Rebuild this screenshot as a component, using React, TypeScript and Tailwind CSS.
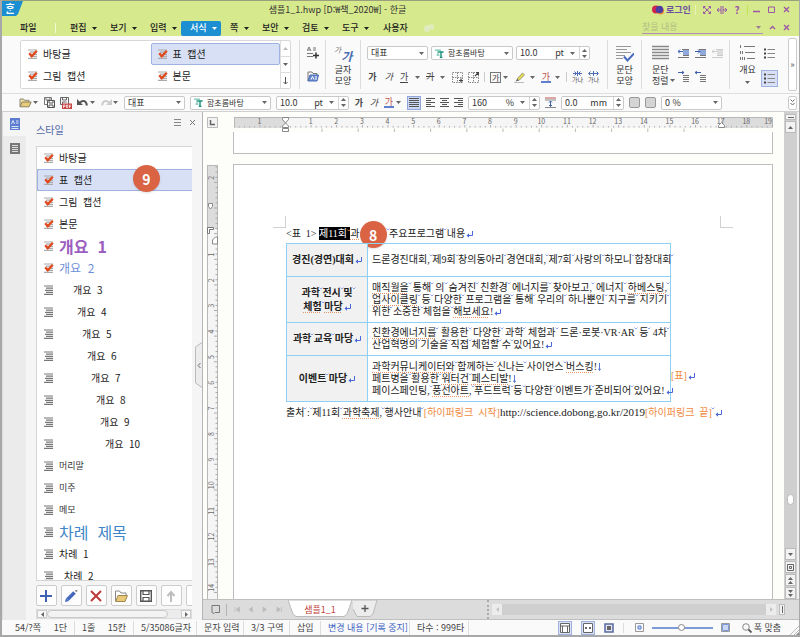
import React from "react";
import clsx from "clsx";

const UI_FONT = "font-['Noto_Sans_CJK_KR','Noto_Sans',sans-serif]";
const DOC_FONT = "font-['Liberation_Serif','Noto_Sans_CJK_KR',serif]";

const menus = ["편집", "보기", "입력", "서식", "쪽", "보안", "검토", "도구"];

const gallery = ["바탕글", "표  캡션", "그림  캡션", "본문"];

type StyleRow = { name: string; checked?: boolean; indent?: number; look?: string };

const styleRows: StyleRow[] = [
  { name: "바탕글", checked: true },
  { name: "표  캡션", checked: true },
  { name: "그림  캡션", checked: true },
  { name: "본문", checked: true },
  { name: "개요  1", checked: true, look: "text-[16px] font-bold text-[#9b5fc0]" },
  { name: "개요  2", checked: true, look: "text-[12px] text-[#6f8fd8]" },
  { name: "개요  3", indent: 14 },
  { name: "개요  4", indent: 18 },
  { name: "개요  5", indent: 23 },
  { name: "개요  6", indent: 28 },
  { name: "개요  7", indent: 32 },
  { name: "개요  8", indent: 37 },
  { name: "개요  9", indent: 41 },
  { name: "개요  10", indent: 46 },
  { name: "머리말", look: "text-[9px] text-[#333]" },
  { name: "미주", look: "text-[9px] text-[#333]" },
  { name: "메모", look: "text-[9px] text-[#333]" },
  { name: "차례  제목", look: "text-[16px] text-[#3f86c8]" },
  { name: "차례  1" },
  { name: "차례  2", indent: 5 },
];

// ˇ = visible space, {..} = spelling mark, [..] = field code, ↵ / ↓ = paragraph and line break
const tableRows = [
  {
    height: "h-[33px]",
    head: ["경진(경연)대회↵"],
    body: ["드론경진대회,ˇ제9회ˇ창의동아리ˇ경연대회,ˇ제7회ˇ사랑의ˇ하모니ˇ합창대회ˇ"],
  },
  {
    height: "h-[46px]",
    head: ["과학ˇ전시ˇ및ˇ", "{체험}ˇ{마당}↵"],
    body: [
      "{매직월을}ˇ통해ˇ의ˇ숨겨진ˇ친환경ˇ에너지를ˇ찾아보고,ˇ에너지ˇ{하베스팅},ˇ",
      "{업사이클링}ˇ등ˇ다양한ˇ프로그램을ˇ통해ˇ우리의ˇ하나뿐인ˇ지구를ˇ지키기ˇ",
      "위한ˇ소중한ˇ체험을ˇ{해보세요}!↵",
    ],
  },
  {
    height: "h-[33px]",
    head: ["과학ˇ교육ˇ마당↵"],
    body: [
      "{친환경에너지를}ˇ활용한ˇ다양한ˇ과학ˇ체험과ˇ드론·로봇·VR·ARˇ등ˇ4차ˇ",
      "산업혁명의ˇ기술을ˇ직접ˇ체험할ˇ수ˇ있어요!↵",
    ],
  },
  {
    height: "h-[46px]",
    head: ["이벤트ˇ마당↵"],
    body: [
      "{과학커뮤니케이터와}ˇ함께하는ˇ신나는ˇ사이언스ˇ{버스킹}!↓",
      "페트병을ˇ활용한ˇ{워터건}ˇ{페스티발}!↓",
      "페이스페인팅,ˇ{풍선아트},ˇ푸드트럭ˇ등ˇ다양한ˇ이벤트가ˇ준비되어ˇ있어요!↵",
    ],
  },
];

/* ---------- small drawings ---------- */

type SvgProps = { w: number; h: number; children: React.ReactNode; className?: string };

const Svg = ({ w, h, children, className }: SvgProps) => (
  <svg
    width={w}
    height={h}
    viewBox={`0 0 ${w} ${h}`}
    fill="none"
    stroke="#666"
    className={clsx("shrink-0", className)}
    aria-hidden="true"
  >
    {children}
  </svg>
);

const Down = ({ color = "#666" }: { color?: string }) => (
  <Svg w={5} h={3}>
    <path d="M0 0h5L2.5 3z" fill={color} stroke="none" />
  </Svg>
);

const Up = ({ color = "#666" }: { color?: string }) => (
  <Svg w={5} h={3}>
    <path d="M0 3h5L2.5 0z" fill={color} stroke="none" />
  </Svg>
);

const StyleIcon = ({ checked }: { checked?: boolean }) => (
  <Svg w={10} h={10}>
    <path d="M0 1h9M2 3.2h7M1 5.4h8M2 7.4h7M0 9.4h9" stroke={checked ? "#aaa" : "#777"} strokeWidth="1.2" />
    {checked && <path d="M1.2 4.2 3.8 7.2 8.8 1.8" stroke="#e2491d" strokeWidth="2.3" />}
  </Svg>
);

const FontMark = () => (
  <Svg w={9} h={9}>
    <path d="M0 1.2h6M3 1v5M1.5 6.2h3" stroke="#7cc5b4" strokeWidth="1.3" />
    <path d="M3.4 3h5.2M6 3v5.5M4.8 8.4h2.6" stroke="#189078" strokeWidth="1.4" />
  </Svg>
);

const FolderIcon = () => (
  <Svg w={13} h={11}>
    <path d="M1 9.5V2h3.5l1 1.3H10V5" fill="#f3dfa0" stroke="#8a8a7a" />
    <path d="M1 9.8 3.2 5h9L10 9.8z" fill="#e8cc7c" stroke="#8a8060" />
  </Svg>
);

const SaveAllIcon = () => (
  <Svg w={11} h={11}>
    <path d="M.5.5h7v7h-7zM2 .5v2.5h4V.5" stroke="#777" />
    <path d="M3.5 3.5h7v7h-7z" fill="#fff" stroke="#555" />
    <path d="M5 3.5V6h4V3.5M5 10.5V8h4v2.5" stroke="#555" />
  </Svg>
);

const PdfIcon = () => (
  <Svg w={12} h={12}>
    <path d="M.5.5h8v7h-8zM2.5.5V3h4V.5M2.5 7.5V5h4" stroke="#666" />
    <path d="M2 6.5h10V12H2z" fill="#c8413f" stroke="none" />
    <path d="M3.5 11V8h1.5v1.5H3.5M6.5 8v2.7h1.3V8zM9.5 11V8h1.5M9.5 9.5h1.3" stroke="#fff" strokeWidth=".7" />
  </Svg>
);

const UndoIcon = ({ flip, color }: { flip?: boolean; color: string }) => (
  <Svg w={11} h={9} className={flip ? "-scale-x-100" : undefined}>
    <path d="M0 1v6h6z" fill={color} stroke="none" />
    <path d="M3 4.5C6 1.5 9.5 3 9.8 7.5" stroke={color} strokeWidth="2" />
  </Svg>
);

const alignPaths = {
  justify: "M0 .5h10M0 2.5h10M0 4.5h10M0 6.5h10M0 8.5h10",
  left: "M0 .5h9M0 2.5h5M0 4.5h9M0 6.5h5M0 8.5h9",
  center: "M0 .5h9M2 2.5h5M0 4.5h9M2 6.5h5M0 8.5h9",
  right: "M0 .5h9M4 2.5h5M0 4.5h9M4 6.5h5M0 8.5h9",
};

const AlignIcon = ({ kind }: { kind: keyof typeof alignPaths }) => (
  <Svg w={kind === "justify" ? 10 : 9} h={9}>
    <path d={alignPaths[kind]} stroke="#555" />
  </Svg>
);

const LineSpaceIcon = () => (
  <Svg w={11} h={11}>
    <path d="M0 1h11" stroke="#c0504d" />
    <path d="M0 3h11M0 10.5h11" stroke="#888" />
    <path d="M5.5 4v5M4 5.5l1.5-1.5L7 5.5M4 8l1.5 1.5L7 8" stroke="#3c5fae" />
  </Svg>
);

const IndentIcon = ({ out, hang, dim }: { out?: boolean; hang?: boolean; dim?: boolean }) => (
  <Svg w={11} h={11}>
    {hang ? (
      <>
        <path d="M0 1.5h6" stroke="#3c5fae" />
        <path d={out ? "M2 0 0 1.5 2 3" : "M4 0l2 1.5L4 3"} stroke="#3c5fae" />
        <path d="M5 4.5h6M5 6.5h6M5 8.5h6M5 10.5h6" stroke="#777" />
      </>
    ) : (
      <>
        <path d="M4 1.5h7M5 3.5h6M5 5.5h6M5 7.5h6M0 9.5h11" stroke={dim ? "#ccc" : "#777"} />
        <path d="M5 2h6v5H5z" fill={dim ? "#ddd" : "#8fa9dd"} stroke="none" />
        <path d={out ? "M0 3.5h5M3 1.5l2 2-2 2" : "M0 3.5h5M2 1.5l-2 2 2 2"} stroke={dim ? "#ccc" : "#3c5fae"} />
      </>
    )}
  </Svg>
);

const BulletIcon = () => (
  <Svg w={11} h={11}>
    <path d="M3.5 1.5H11M3.5 5.5H11M3.5 9.5H11" stroke="#888" />
    <path d="M0 1.5h2M0 5.5h2M0 9.5h2" stroke="#444" strokeWidth="2" />
  </Svg>
);

const GridIcon = ({ mark }: { mark: string }) => (
  <Svg w={11} h={11}>
    <path d="M.5.5h10v10H.5zM5.5.5v10M.5 5.5h10" stroke="#888" strokeDasharray="1.5 1" />
    <path d={mark} stroke="#444" strokeWidth="1.2" />
  </Svg>
);

const SpacingIcon = ({ wide }: { wide?: boolean }) => (
  <Svg w={11} h={5}>
    <path d="M1 2.5h9" stroke="#4a6cb5" />
    <path
      d={wide ? "M2.5.5l-2 2 2 2M8.5.5l2 2-2 2M5.5 0v5" : "M2.5.5l2 2-2 2M8.5.5l-2 2 2 2M5.5 0v5"}
      stroke="#4a6cb5"
    />
  </Svg>
);

const ReturnMark = ({ line }: { line?: boolean }) =>
  line ? (
    <svg width="3" height="8" viewBox="0 0 3 8" fill="none" stroke="#5b78d6" className="ml-px inline-block align-middle" aria-hidden="true">
      <path d="M1.5 0v7M0 5.5l1.5 2 1.5-2" />
    </svg>
  ) : (
    <svg width="7" height="7" viewBox="0 0 7 7" fill="none" stroke="#4a68d8" className="ml-px inline-block align-middle" aria-hidden="true">
      <path d="M6.5 0v4.5H2" />
      <path d="M3 2.2.5 4.5 3 6.8z" fill="#4a68d8" stroke="none" />
    </svg>
  );

/* ---------- controls ---------- */

const Field = "flex h-3.5 shrink-0 items-center rounded-xs border border-[#c9c9c9] bg-white text-[9px] text-[#333]";

const Select = ({ label, value, width, mark }: { label: string; value: string; width: string; mark?: boolean }) => (
  <label className={clsx(Field, width, "gap-1 px-[3px]")}>
    {mark && <FontMark />}
    <select
      aria-label={label}
      className={clsx("h-3 min-w-0 flex-1 appearance-none leading-3 outline-none", mark && "text-[8px]")}
    >
      <option>{value}</option>
    </select>
    <Down />
  </label>
);

const NumberBox = ({ label, value, unit, width, drop }: { label: string; value: string; unit: string; width: string; drop?: boolean }) => (
  <div className={clsx(Field, width, "pl-[3px]")}>
    <input aria-label={label} defaultValue={value} className="w-0 min-w-0 flex-1 leading-3 outline-none" />
    <span className="mr-1.5">{unit}</span>
    {drop && (
      <span className="mr-1">
        <Down />
      </span>
    )}
    <span className="flex h-full w-2.5 flex-col items-center justify-around border-l border-[#d5d5d5]">
      <Up />
      <Down />
    </span>
  </div>
);

const Tool = ({ label, width, drop, children }: { label: string; width?: string; drop?: boolean; children: React.ReactNode }) => (
  <button aria-label={label} className={clsx("flex h-3.5 shrink-0 items-center", width, drop ? "justify-between pr-px" : "justify-center")}>
    {children}
    {drop && <Down />}
  </button>
);

const ColorGa = () => (
  <span className="flex flex-col items-center text-[9px] leading-[9px] text-[#c0504d]">
    가
    <span className="h-0.5 w-2.5 bg-[#5f7fd0]" />
  </span>
);

const Divider = () => <span className="h-2.5 w-px shrink-0 bg-[#ccc]" />;

/* ---------- header ---------- */

const Header = () => (
  <header className="flex h-9 shrink-0 border-t border-[#9aa07c] bg-[#d6e98c]">
    <div className="flex min-w-0 flex-1 flex-col">
      <div className="flex h-[17px] items-center">
        <div className="relative h-[15px] w-[21px] shrink-0 self-start">
          <svg width="21" height="15" viewBox="0 0 21 15" className="block" aria-hidden="true">
            <path d="M0 0h21l-5 13-2 2H0z" fill="#1c8fd2" />
          </svg>
          <span className="absolute left-[3px] top-0 text-[11px] font-bold leading-[14px] text-white">ᄒᆞᆫ</span>
        </div>
        <h1 className="flex-1 text-center text-[9px] text-[#333]">샘플1_1.hwp [D:₩책_2020₩] - 한글</h1>
      </div>
      <nav className="flex h-[18px] items-center pt-0.5 text-[9px] font-medium text-[#222]">
        <button className="w-[53px] pl-[18px] text-left">파일</button>
        <span className="mr-[5px] h-2.5 w-px bg-[#f2f9cf]" />
        {menus.map((menu) => (
          <button
            key={menu}
            className={clsx(
              "flex h-[15px] items-center justify-between pl-[9px] pr-1",
              menu === "쪽" ? "w-8" : "w-10",
              menu === "서식" && "rounded-xs bg-[#1c8fd2] text-white"
            )}
          >
            {menu}
            <Down color={menu === "서식" ? "#fff" : "#222"} />
          </button>
        ))}
        <button className="pl-2.5">사용자</button>
        <Svg w={10} h={9} className="ml-4">
          <path d="M1 2h4v5H1zM6 1h3v4H6z" fill="#dfe9bd" stroke="#e4eecb" />
        </Svg>
      </nav>
    </div>
    <div className="flex w-[147px] shrink-0 flex-col text-[#9a55a8]">
      <div className="flex h-[17px] items-center">
        <Svg w={12} h={10}>
          <circle cx="4" cy="4.5" r="4" fill="#d0234e" stroke="none" />
          <circle cx="8.5" cy="6" r="3.5" fill="#f08a35" stroke="none" />
          <circle cx="7.5" cy="4.5" r="3.8" fill="#4b3ea0" stroke="none" />
        </Svg>
        <button className="ml-0.5 w-[29px] text-left text-[9px] font-bold text-[#6b4fa0]">로그인</button>
        <span className="h-2.5 w-px bg-[#e8f3b8]" />
        <div className="flex flex-1 items-center gap-1.5 pl-[7px]">
          <Svg w={8} h={8}>
            <path d="M.5 2.5v-2h2M5.5.5h2v2M7.5 5.5v2h-2M2.5 7.5h-2v-2M1 1l6 6M7 1 1 7" stroke="#9a55a8" />
          </Svg>
          <Svg w={10} h={8}>
            <path d="M4 0v8M6 0v8M0 4h4M6 4h4M2 2 0 4l2 2M8 2l2 2-2 2" stroke="#9a55a8" />
          </Svg>
          <button className="w-2 text-[10px] font-bold">?</button>
          <span className="h-2.5 w-px bg-[#c3e356]" />
        </div>
        <div className="flex gap-2 pr-[9px]">
          <Svg w={7} h={7}>
            <path d="M0 5.5h7" stroke="#9a55a8" strokeWidth="1.5" />
          </Svg>
          <Svg w={7} h={7}>
            <path d="M.5 1h6v5.5h-6z" stroke="#9a55a8" />
          </Svg>
          <Svg w={7} h={7}>
            <path d="M1 1l5 5M6 1 1 6" stroke="#9a55a8" strokeWidth="1.3" />
          </Svg>
        </div>
      </div>
      <div className="-ml-2.5 flex h-[18px] items-center pt-px">
        <label className="flex h-[13px] w-[121px] items-center border-b border-[#b48bbd] pr-0.5">
          <input
            aria-label="찾을 내용"
            placeholder="찾을 내용"
            className="min-w-0 flex-1 text-[9px] leading-3 outline-none placeholder:text-[#b2bd85]"
          />
          <Down color="#9a7a98" />
        </label>
        <div className="flex flex-1 items-center justify-between pl-1.5 pr-[9px]">
          <Svg w={7} h={5}>
            <path d="M1 4l2.5-2.5L6 4" stroke="#9a55a8" strokeWidth="1.3" />
          </Svg>
          <Svg w={7} h={7}>
            <path d="M1 1l5 5M6 1 1 6" stroke="#9a55a8" strokeWidth="1.3" />
          </Svg>
        </div>
      </div>
    </div>
  </header>
);

/* ---------- ribbon ---------- */

const section = "my-1 flex shrink-0 border-l border-[#dcdcdc]";
const bigButton = "flex w-full flex-col items-center text-[9px] leading-[11px] text-[#333]";

const Ribbon = () => (
  <div className="flex h-[58px] shrink-0 border-b border-[#dedede] bg-[#fafafa]">
    <div className="my-1 ml-[18px] mr-2 flex w-[271px] shrink-0 rounded-xs border border-[#d8d8d8] bg-white">
      <div className="grid flex-1 grid-cols-2 content-center">
        {gallery.map((name, i) => (
          <button
            key={name}
            className={clsx(
              "flex h-[22px] items-center gap-[5px] whitespace-pre border pl-1.5 text-[10px] text-[#222]",
              i === 1 ? "rounded-xs border-[#9fb2e0] bg-[#d8e0f5]" : "border-transparent"
            )}
          >
            <StyleIcon checked />
            {name}
          </button>
        ))}
      </div>
      <div className="flex w-[10px] flex-col divide-y divide-[#ddd] border-l border-[#ddd]">
        <button aria-label="위로" className="flex flex-1 items-center justify-center">
          <Up color="#bbb" />
        </button>
        <button aria-label="아래로" className="flex flex-1 items-center justify-center">
          <Down />
        </button>
        <button aria-label="자세히" className="flex flex-1 items-center justify-center">
          <Svg w={5} h={8}>
            <path d="M2.5 0v7M.5 5l2 2 2-2" stroke="#555" />
          </Svg>
        </button>
      </div>
    </div>

    <div className={clsx(section, "w-[26px] flex-col items-center justify-between py-[7px]")}>
      <Svg w={12} h={12}>
        <path d="M0 4 2 0l2 4M1 3h2M6 1h3M6 3h3M0 6.5h6M0 9.5h6" stroke="#777" />
        <path d="M9 5.5v6M6 8.5h6" stroke="#333" strokeWidth="1.5" />
      </Svg>
      <Svg w={12} h={11}>
        <path d="M1 10V1h4l1 1.5h4V4" stroke="#777" />
        <path d="M1 10 3 4h8.5L10 10z" fill="#6b8bd0" stroke="#4a6cb5" />
        <path d="M4 8.5 5.5 5.5 7 8.5M8 6h2M8 8h2" stroke="#fff" />
      </Svg>
    </div>

    <div className={clsx(section, "w-[35px] pt-[5px]")}>
      <button className={bigButton}>
        <span className="flex h-[19px] items-start">
          <span className="text-[8px] italic leading-[9px] text-[#888]">가</span>
          <span className="pt-1 text-[12px] font-bold italic leading-[14px] text-[#4a6cb5]">가</span>
        </span>
        글자
        <br />
        모양
      </button>
    </div>

    <div className={clsx(section, "w-[247px] flex-col pl-[6px] pt-[6px]")}>
      <div className="flex gap-[3px]">
        <Select label="스타일 종류" value="대표" width="w-[61px]" />
        <Select label="글꼴" value="함초롬바탕" width="w-[82px]" mark />
        <NumberBox label="글자 크기" value="10.0" unit="pt" width="w-[74px]" drop />
      </div>
      <div className="mt-2.5 flex items-center gap-[5px] whitespace-nowrap text-[9px] leading-3 text-[#444]">
        <Tool label="진하게" width="w-[11px]"><b>가</b></Tool>
        <Tool label="기울임" width="w-3"><i>가</i></Tool>
        <Tool label="밑줄" width="w-[21px]" drop><span className="border-b border-[#444] leading-[10px]">가</span></Tool>
        <Tool label="취소선" width="w-5" drop><s>가</s></Tool>
        <Tool label="테두리" width="w-3"><GridIcon mark="M7 8.5h4M9 6.5v4" /></Tool>
        <Tool label="배경" width="w-[11px]"><GridIcon mark="M8 .5h2.5v2.5M10 1 7 4" /></Tool>
        <Divider />
        <Tool label="글자 테두리" width="w-[19px]" drop><span className="border border-[#777] px-px text-[8px] leading-[9px]">가</span></Tool>
        <Tool label="형광펜" width="w-[22px]" drop>
          <Svg w={11} h={11}>
            <path d="M3 7 8.5 1l2 1.8L5 8.5z" fill="#e6dc4c" stroke="#777" strokeWidth=".7" />
            <path d="M3 7l2 1.5L1.5 9.5z" fill="#666" stroke="none" />
            <path d="M0 10.5h10" stroke="#bbb" />
          </Svg>
        </Tool>
        <Tool label="글자 색" width="w-5" drop><ColorGa /></Tool>
        <Divider />
        <Tool label="자간 좁게" width="w-[11px]">
          <span className="flex flex-col items-center gap-px text-[6px] leading-[6px]"><SpacingIcon />가나</span>
        </Tool>
        <Tool label="자간 넓게" width="w-[11px]">
          <span className="flex flex-col items-center gap-px text-[6px] leading-[6px]"><SpacingIcon wide />가나</span>
        </Tool>
      </div>
    </div>

    <div className={clsx(section, "w-[34px] pt-[5px]")}>
      <button className={bigButton}>
        <Svg w={18} h={19}>
          <path d="M0 1.5h15M0 4.5h11M0 7.5h15M0 10.5h9M0 13.5h7" stroke="#999" />
          <path d="M8 11.5l3.5 4L18 8.5" stroke="#4a6cc0" strokeWidth="2" />
        </Svg>
        문단
        <br />
        모양
      </button>
    </div>

    <div className={clsx(section, "w-[88px] gap-1 pl-2.5 pt-[5px]")}>
      <button className="flex w-[22px] shrink-0 flex-col items-start whitespace-nowrap text-[9px] leading-[11px] text-[#333]">
        <Svg w={17} h={19}>
          <path d="M0 1.5h17M0 4.5h17M0 7.5h17M0 10.5h17M0 13.5h17" stroke="#888" strokeWidth="1.5" />
        </Svg>
        문단
        <span className="flex items-center gap-px">정렬<Down /></span>
      </button>
      <div className="grid h-[37px] grid-cols-3 content-between gap-x-1.5 pt-[3px]">
        <IndentIcon />
        <IndentIcon out />
        <IndentIcon dim />
        <IndentIcon hang />
        <IndentIcon hang out />
      </div>
    </div>

    <div className={clsx(section, "flex-1 gap-[5px] pl-[9px] pt-[5px]")}>
      <button className="flex flex-col items-center text-[9px] leading-[11px] text-[#333]">
        <Svg w={17} h={19}>
          <path d="M1.5 0v3M5 1.5h11M1.5 6v3M3.5 6v3M6 7.5h10M1.5 12v3M3.5 12v3M5.5 12v3M8 13.5h8" stroke="#777" />
        </Svg>
        개요
        <span className="pt-1.5"><Down /></span>
      </button>
      <div className="flex h-[42px] flex-col justify-between">
        <button aria-label="글머리표" className="pl-[3px] pt-[3px]"><BulletIcon /></button>
        <button aria-label="개요 번호" className="border border-[#9fb2e0] bg-[#d8e0f5] px-0.5 py-[2px]"><BulletIcon /></button>
      </div>
    </div>
    <button aria-label="더 보기" className="mx-0.5 my-0.5 w-[9px] shrink-0 rounded-xs border border-[#ccc] bg-white text-[9px] leading-3 text-[#555]">
      »
    </button>
  </div>
);

const Toolbar = () => (
  <div className="flex h-[18px] shrink-0 items-center gap-[5px] border-b border-[#d0d0d0] bg-[#fafafa] pl-[17px] pr-0.5 text-[9px] leading-3 text-[#444]">
    <Tool label="열기" width="w-5" drop><FolderIcon /></Tool>
    <Tool label="저장"><SaveAllIcon /></Tool>
    <Tool label="PDF로 저장"><PdfIcon /></Tool>
    <Tool label="되돌리기" width="w-[19px]" drop><UndoIcon color="#555" /></Tool>
    <Tool label="다시 실행" width="w-[18px]" drop><UndoIcon color="#ccc" flip /></Tool>
    <Select label="스타일" value="대표" width="w-[61px]" />
    <Select label="글꼴 이름" value="함초롬바탕" width="w-[81px]" mark />
    <NumberBox label="크기" value="10.0" unit="pt" width="w-[73px]" drop />
    <Tool label="굵게" width="w-2.5"><b>가</b></Tool>
    <Tool label="기울이기" width="w-2.5"><i>가</i></Tool>
    <Tool label="색" width="w-[18px]" drop><ColorGa /></Tool>
    <button aria-label="양쪽 정렬" className="flex h-3.5 w-3.5 shrink-0 items-center justify-center border border-[#8fa5dc] bg-[#ccd8f3]">
      <AlignIcon kind="justify" />
    </button>
    <Tool label="왼쪽 정렬"><AlignIcon kind="left" /></Tool>
    <Tool label="가운데 정렬"><AlignIcon kind="center" /></Tool>
    <Tool label="오른쪽 정렬"><AlignIcon kind="right" /></Tool>
    <NumberBox label="줄 간격" value="160" unit="%" width="w-[72px]" drop />
    <Tool label="문단 간격"><LineSpaceIcon /></Tool>
    <NumberBox label="간격" value="0.0" unit="mm" width="w-[63px]" />
    <button aria-label="테두리 색" className="h-[11px] w-[11px] shrink-0 rounded-xs border border-[#999] bg-[#d4d4d4]" />
    <button aria-label="배경 색" className="h-[11px] w-[11px] shrink-0 rounded-xs border border-[#999] bg-[#d4d4d4]" />
    <Select label="농도" value="0 %" width="w-[61px]" />
    <button aria-label="도구 더 보기" className="ml-auto flex h-3.5 w-[9px] items-center justify-center rounded-xs border border-[#ccc] bg-white">
      <Svg w={5} h={7}>
        <path d="M.5.5l2 2 2-2M.5 4l2 2 2-2" />
      </Svg>
    </button>
  </div>
);

/* ---------- style panel ---------- */

const Badge = ({ n, className }: { n: number; className: string }) => (
  <span
    className={clsx(
      "h-[27px] w-[27px] items-center justify-center rounded-full bg-[#d96343] font-['Noto_Sans_CJK_KR',sans-serif] text-[14px] font-bold leading-none text-white shadow-sm",
      className
    )}
  >
    {n}
  </span>
);

const panelIcons = [
  { label: "스타일 추가", art: <path d="M6 0v12M0 6h12" stroke="#3f62b0" strokeWidth="2" /> },
  {
    label: "스타일 편집",
    art: (
      <>
        <path d="M2.5 9.5 9.5 2.5" stroke="#4468bb" strokeWidth="3.5" />
        <path d="M0 12l1-4 3 3z" fill="#4468bb" stroke="none" />
        <path d="M10.5 0 12 1.5" stroke="#888" strokeWidth="2" />
      </>
    ),
  },
  { label: "스타일 삭제", art: <path d="M1 1l10 10M11 1 1 11" stroke="#bf3a3a" strokeWidth="2" /> },
  {
    label: "불러오기",
    art: (
      <>
        <path d="M.5 11V1h4l1.5 2h5v2" fill="#fff" stroke="#888" />
        <path d="M.7 11.5 3 5.5h9.5L10 11.5z" fill="#e8c879" stroke="#a08850" />
      </>
    ),
  },
  {
    label: "저장하기",
    art: (
      <>
        <path d="M.7.7h10.6v10.6H.7z" stroke="#555" strokeWidth="1.4" />
        <path d="M3 1v3.5h6V1M3 11V7.5h6V11" stroke="#555" strokeWidth="1.2" />
      </>
    ),
  },
  { label: "위로 이동", art: <path d="M6 12V3M2.5 6 6 2l3.5 4" stroke="#bdbdbd" strokeWidth="2" /> },
];

const StylePanel = () => (
  <aside className="flex w-[201px] shrink-0 border-r border-[#b5b5b5]">
    <div className="flex w-6 shrink-0 flex-col border-l border-[#ddd] bg-[#ebebeb]">
      <button aria-label="스타일" className="flex h-6 items-center justify-center bg-[#f5f5f5]">
        <Svg w={10} h={12}>
          <path d="M0 0h10v12H0z" fill="#5a7dd0" stroke="none" />
          <path d="M1.5 6 3 2.5 4.5 6M6 3h2.5M6 5h2.5M1.5 8.5h7M1.5 10.5h7" stroke="#fff" strokeWidth=".8" />
        </Svg>
      </button>
      <button aria-label="목록" className="flex h-6 items-center justify-center">
        <Svg w={10} h={11}>
          <path d="M0 0h10v11H0z" fill="#777" stroke="none" />
          <path d="M2 2.5h6M2 4.5h6M2 6.5h6M2 8.5h6" stroke="#ddd" />
        </Svg>
      </button>
    </div>
    <div className="relative flex min-w-0 flex-1 flex-col bg-[#f5f5f5] px-2.5">
      <div className="flex h-[34px] shrink-0 justify-between">
        <h2 className="pt-[11px] text-[10px] leading-[14px] text-[#5368a8]">스타일</h2>
        <div className="-mr-1 flex gap-2 pt-[7px]">
          <Svg w={7} h={7}>
            <path d="M0 .5h7M0 3.5h7M0 6.5h7" stroke="#888" />
          </Svg>
          <Svg w={7} h={7}>
            <path d="M1 1l5 5M6 1 1 6" stroke="#777" />
          </Svg>
        </div>
      </div>
      <ul className="min-h-0 flex-1 overflow-hidden border-y border-l border-[#d5d5d5] bg-white">
        {styleRows.map((row, i) => (
          <li key={row.name}>
            <button
              className={clsx(
                "flex h-[22px] w-full items-center gap-[5px] whitespace-pre border-y border-l pl-1.5 text-left leading-5",
                i === 1 ? "border-[#9fb2e0] bg-[#d8e0f5]" : "border-transparent",
                row.look ?? "text-[10px] text-[#222]"
              )}
            >
              <StyleIcon checked={row.checked} />
              <span style={{ paddingLeft: row.indent }}>{row.name}</span>
            </button>
          </li>
        ))}
      </ul>
      <div className="mt-1 flex h-[22px] shrink-0 gap-1 overflow-hidden">
        {panelIcons.map((icon) => (
          <button
            key={icon.label}
            aria-label={icon.label}
            className="flex h-[21px] w-[21px] shrink-0 items-center justify-center rounded-xs border border-[#ccc] bg-[#fdfdfd]"
          >
            <Svg w={13} h={12}>{icon.art}</Svg>
          </button>
        ))}
        <span className="h-[21px] w-[21px] shrink-0 rounded-xs border border-[#ccc] bg-white" />
      </div>
      <div className="mb-px mt-0.5 flex h-2.5 shrink-0 items-center border border-[#ddd] bg-[#ececec]">
        <span className="flex h-full w-2.5 items-center justify-center border border-[#ccc] bg-[#f8f8f8]">
          <Svg w={3} h={5}><path d="M3 0v5L0 2.5z" fill="#666" stroke="none" /></Svg>
        </span>
        <span className="h-2 w-[121px] rounded-full border border-[#c8c8c8] bg-[#f3f3f3]" />
        <span className="ml-auto flex h-full w-2.5 items-center justify-center border border-[#ccc] bg-[#f8f8f8]">
          <Svg w={3} h={5}><path d="M0 0v5l3-2.5z" fill="#666" stroke="none" /></Svg>
        </span>
      </div>
      <button aria-label="패널 접기" className="absolute right-0 top-[230px]">
        <Svg w={7} h={46}>
          <path d="M7 .5.5 5v36L7 45.5" fill="#ececec" stroke="#bbb" />
          <path d="M5.5 21 3 23.5 5.5 26" stroke="#666" />
        </Svg>
      </button>
      <Badge n={9} className="absolute left-[107px] top-[53px] flex" />
    </div>
  </aside>
);

/* ---------- document ---------- */

const CM = 25.63;

const HorizontalRuler = () => (
  <svg width="539" height="16" viewBox="0 0 539 16" className="max-w-full" aria-hidden="true">
    <rect x="0" y="1" width="538" height="10" fill="#f5f5f5" />
    <rect x="0" y="1" width="51" height="10" fill="#dcdcdc" />
    <rect x="487" y="1" width="51" height="10" fill="#dcdcdc" />
    <path d="M0 .5h538.5v10M.5 0v10" stroke="#b8b8b8" fill="none" />
    {Array.from({ length: 106 }, (_, i) => (
      <path key={i} d={`M${(i * CM) / 5 + 0.2} ${i % 5 ? 9 : 8}v${i % 5 ? 1.5 : 2.5}`} stroke="#b0b0b0" />
    ))}
    {Array.from({ length: 21 }, (_, i) => i - 1)
      .filter((n) => n !== 0)
      .map((n) => (
        <text key={n} x={n === 19 ? 538 : 51 + n * CM} y="7" fontSize="7" fill="#666" textAnchor={n === 19 ? "end" : "middle"}>
          {Math.abs(n)}
        </text>
      ))}
    {Array.from({ length: 11 }, (_, i) => (
      <path key={i} d={`M${88 + i * 36.2} 11.5v3.5`} stroke="#bbb" />
    ))}
    <path d="M48.5.5h6v2l-3 3.5-3-3.5zM48.5 10.5v-1.5l3-3 3 3v1.5zM48.5 11.5h6v3h-6z" fill="#fff" stroke="#888" />
    <path d="M484.5 10.5V8.5l3-3 3 3v2z" fill="#fff" stroke="#888" />
  </svg>
);

const VerticalRuler = () => (
  <svg width="11" height="434" viewBox="0 0 11 434" aria-hidden="true">
    <rect width="10" height="434" fill="#f5f5f5" />
    <rect width="10" height="64" fill="#dcdcdc" />
    <path d="M0 .5h10M.5 0v434M10.5 0v434" stroke="#b8b8b8" fill="none" />
    {Array.from({ length: 84 }, (_, i) => (
      <path key={i} d={`M${(i + 2) % 5 ? 8.5 : 7} ${(i * CM) / 5 + 2}h3`} stroke="#aaa" />
    ))}
    {Array.from({ length: 17 }, (_, i) => i - 2)
      .filter((n) => n > 0 || n === -2)
      .map((n) => (
        <text
          key={n}
          transform={`translate(6.5 ${64 + n * CM}) rotate(-90)`}
          fontSize="7"
          fill="#666"
          textAnchor="middle"
        >
          {Math.abs(n)}
        </text>
      ))}
    <path d="M1.5 38.5h4v3l-2 2.5-2-2.5z" fill="#fff" stroke="#888" />
    <path d="M.5 62.5h6v2h-4v4h-2z" fill="#fff" stroke="#777" />
    <path d="M5.5 79v-4l3-3h2v7z" fill="#fff" stroke="#888" />
  </svg>
);

const DocText = ({ text }: { text: string }) => (
  <>
    {text
      .split(/(ˇ|↵|↓|\{[^}]*\}|\[[^\]]*\])/)
      .filter(Boolean)
      .map((part, i) => {
        if (part === "ˇ")
          return (
            <span key={i} className="relative">
              {" "}
              <svg width="4" height="3" viewBox="0 0 4 3" fill="none" stroke="#8fa6ee" className="absolute -left-px top-0 inline" aria-hidden="true">
                <path d="M.5.5 2 2 3.5.5" />
              </svg>
            </span>
          );
        if (part === "↵") return <ReturnMark key={i} />;
        if (part === "↓") return <ReturnMark key={i} line />;
        if (part[0] === "{")
          return (
            <span key={i} className="underline decoration-[#e59467] decoration-dotted decoration-1 underline-offset-2">
              {part.slice(1, -1)}
            </span>
          );
        if (part[0] === "[")
          return <span key={i} className="whitespace-pre text-[#f08a3c]">{part}</span>;
        return <React.Fragment key={i}>{part}</React.Fragment>;
      })}
  </>
);

const Page = () => (
  <div className="flex-1 overflow-hidden border-x border-t border-[#bdbdbd] bg-white pt-[51px]">
    <div className="flex h-3 justify-between px-[39px]">
      <span className="w-[13px] border-b border-r border-[#d0d0d0]" />
      <span className="w-[13px] border-b border-l border-[#d0d0d0]" />
    </div>
    <div className={clsx("whitespace-nowrap pl-[52px] text-[10px] leading-3 text-[#222]", DOC_FONT)}>
      <p>
        &lt;표{"\u00a0\u00a0"}1&gt;{"\u00a0"}
        <span className="bg-black py-px text-white">
          제11회<span className="text-[#f08a3c]">ˇ</span>
        </span>
        <DocText text="{과}" />
        <Badge n={8} className="-my-2 inline-flex align-middle" />
        <DocText text="ˇ주요프로그램ˇ내용↵" />
      </p>
      <div className="mt-[3px] flex items-end">
        <table className="w-[385px] table-fixed border-collapse border border-[#8ed0f2]">
          <colgroup>
            <col className="w-[81px]" />
            <col />
          </colgroup>
          <tbody>
            {tableRows.map((row) => (
              <tr key={row.head[0]} className={row.height}>
                <th scope="row" className="border border-[#8ed0f2] bg-[#f1f1f1] p-0 text-center font-bold leading-3.5">
                  {row.head.map((line) => (
                    <div key={line}><DocText text={line} /></div>
                  ))}
                </th>
                <td className="border border-[#8ed0f2] py-0 pl-1 pr-[3px] leading-3">
                  {row.body.map((line) => (
                    <div key={line} className={line.endsWith("ˇ") ? "[text-align-last:justify]" : undefined}>
                      <DocText text={line} />
                    </div>
                  ))}
                </td>
              </tr>
            ))}
          </tbody>
        </table>
        <span className="pb-5"><DocText text="[표]↵" /></span>
      </div>
      <p className="mt-1">
        <DocText text="출처ˇ:ˇ제11회ˇ{과학축제},ˇ행사안내ˇ[하이퍼링크  시작]" />
        <a href="http://science.dobong.go.kr/2019" className="text-[11px]">http://science.dobong.go.kr/2019</a>
        <DocText text="[하이퍼링크  끝]ˇ ↵" />
      </p>
    </div>
  </div>
);

const scrollButton = "flex h-3 w-[11px] shrink-0 items-center justify-center border border-[#bbb] bg-[#f2f2f2]";

const VerticalScroll = () => (
  <div className="flex w-[13px] shrink-0 flex-col items-center gap-px bg-[#cfcfcf] pt-0.5">
    <button aria-label="나누기" className="flex h-1.5 w-[11px] items-center justify-center border border-[#bbb] bg-[#f2f2f2]">
      <span className="h-px w-1.5 bg-[#666]" />
    </button>
    <button aria-label="위로" className={scrollButton}><Up /></button>
    <div className="flex w-full flex-1 flex-col items-center justify-end pb-[42px]">
      <span className="h-[11px] w-[7px] rounded-full border border-[#bbb] bg-white" />
    </div>
    <button aria-label="아래로" className={scrollButton}><Down /></button>
    <button aria-label="개체 선택" className={scrollButton}>
      <Svg w={7} h={7}><path d="M.5.5h6v6h-6zM2.5 2.5h2v2h-2z" /></Svg>
    </button>
    <button aria-label="이전 쪽" className={scrollButton}>
      <Svg w={5} h={7}><path d="M0 3h5L2.5 0zM0 7h5L2.5 4z" fill="#666" stroke="none" /></Svg>
    </button>
    <button aria-label="다음 쪽" className={scrollButton}>
      <Svg w={5} h={7}><path d="M0 0h5L2.5 3zM0 4h5L2.5 7z" fill="#666" stroke="none" /></Svg>
    </button>
  </div>
);

const navPaths = ["M1 1v5M5.5 1v5L2 3.5z", "M4.5 1v5L1 3.5z", "M1 1v5l3.5-2.5z", "M5.5 1v5M1 1v5l3.5-2.5z"];

const TabBar = () => (
  <div className="flex h-[21px] shrink-0 items-center border-y border-[#bfbfbf] bg-[#dcdcdc]">
    <div className="flex w-[85px] shrink-0 items-center gap-[7px] pl-2">
      <Svg w={9} h={9}><path d="M1 .5h7.5v7H4l-1 1-2-1z" stroke="#777" /></Svg>
      <span className="-ml-px h-3 w-px bg-[#b5b5b5]" />
      {navPaths.map((d) => (
        <Svg key={d} w={7} h={7}><path d={d} fill="#bbb" stroke="#bbb" strokeWidth=".7" /></Svg>
      ))}
    </div>
    <button className="relative h-full w-[64px] shrink-0 text-[9px] text-[#c0413c]">
      <svg width="64" height="17" viewBox="0 0 64 17" className="absolute left-0 top-0" aria-hidden="true">
        <path d="M0 0h64l-5 14-3 2.5H8L5 14z" fill="#fff" stroke="#bbb" />
      </svg>
      <span className="relative">샘플1_1</span>
    </button>
    <button aria-label="새 탭" className="h-full shrink-0">
      <Svg w={26} h={19}>
        <path d="M1 0h24l-4 14-3 2.5H5L1 9" fill="#ececec" stroke="#bbb" />
        <path d="M13 5v7M9.5 8.5h7" stroke="#555" strokeWidth="1.3" />
      </Svg>
    </button>
    <div className="ml-[109px] h-full w-0 border-l-2 border-dotted border-[#aaa]" />
    <div className="ml-[3px] flex h-[11px] min-w-0 flex-1 items-center justify-between bg-[#cfcfcf]">
      <span className="flex h-full w-2.5 items-center justify-center bg-[#ececec]">
        <Svg w={3} h={5}><path d="M3 0v5L0 2.5z" fill="#c4c4c4" stroke="none" /></Svg>
      </span>
      <span className="flex h-full w-2.5 items-center justify-center bg-[#ececec]">
        <Svg w={3} h={5}><path d="M0 0v5l3-2.5z" fill="#c4c4c4" stroke="none" /></Svg>
      </span>
    </div>
    <span className="ml-[3px] mr-3.5 flex h-[11px] w-1.5 justify-center border border-[#bbb] bg-[#f2f2f2] py-px">
      <span className="w-px bg-[#666]" />
    </span>
  </div>
);

const DocumentArea = () => (
  <section className="flex min-w-0 flex-1 flex-col">
    <div className="flex min-h-0 flex-1 bg-[#fdfef9]">
      <div className="flex w-[30px] shrink-0 flex-col overflow-hidden pl-1">
        <button aria-label="탭 종류" className="mb-[37px] mt-[5px] shrink-0">
          <Svg w={11} h={11}>
            <path d="M.5.5h10v10H.5z" fill="#f2f2f2" stroke="#bbb" />
            <path d="M3.5 3v4.5H8" stroke="#666" strokeWidth="1.5" />
          </Svg>
        </button>
        <VerticalRuler />
      </div>
      <div className="flex min-w-0 flex-1 flex-col">
        <div className="h-5 shrink-0 overflow-hidden pl-px pt-[5px]"><HorizontalRuler /></div>
        <div className="mb-2.5 h-[22px] shrink-0 border-x border-b border-[#bdbdbd] bg-white" />
        <Page />
      </div>
      <div className="w-[11px] shrink-0" />
      <VerticalScroll />
      <div className="w-0.5 shrink-0 bg-[#f0f0f0]" />
    </div>
    <TabBar />
  </section>
);

/* ---------- status bar ---------- */

const statusCell = "border-r border-[#ddd] px-[7px] whitespace-nowrap";

const StatusBar = () => (
  <footer className="flex h-[17px] shrink-0 items-center border-b-2 border-[#a8a8a8] bg-[#fafafa] text-[9px] leading-[14px] text-[#444]">
    <div className={clsx(statusCell, "flex w-[73px] justify-between pl-[13px]")}><span>54/?쪽</span><span>1단</span></div>
    <div className={clsx(statusCell, "flex w-[59px] justify-between")}><span>1줄</span><span>15칸</span></div>
    <div className={clsx(statusCell, "w-[63px]")}>5/35086글자</div>
    <div className={clsx(statusCell, "w-[47px]")}>문자 입력</div>
    <div className={clsx(statusCell, "w-[46px]")}>3/3 구역</div>
    <div className={clsx(statusCell, "w-[31px]")}>삽입</div>
    <div className={clsx(statusCell, "w-[89px] text-[#3c62c4]")}>변경 내용 [기록 중지]</div>
    <div className={clsx(statusCell, "w-[59px]")}>타수 : 999타</div>
    <div className="ml-auto flex items-center gap-[5px]">
      <button aria-label="쪽 윤곽" className="border border-[#9fb2e0] bg-[#d8e0f5] p-px">
        <Svg w={10} h={10}><path d="M.5.5h9v9h-9zM.5 3h9M2.5 3v6.5M7.5 3v6.5" fill="#fff" /></Svg>
      </button>
      <button aria-label="맞쪽" className="ml-1 border border-[#9fb2e0] bg-[#d8e0f5] p-px">
        <Svg w={10} h={10}>
          <path d="M.5.5h9v9h-9z" fill="#fff" />
          <path d="M2 5h2M6 5h2" strokeWidth="2" />
        </Svg>
      </button>
      <button aria-label="전체 화면" className="px-1">
        <Svg w={10} h={10}><path d="M1 1h8v8H1z" fill="#e4e8f6" stroke="#5668a0" strokeWidth="1.5" /><path d="M3 3h4v4H3z" fill="#666" stroke="none" /></Svg>
      </button>
      <span className="h-2.5 w-px bg-[#ddd]" />
      <button aria-label="축소" className="pl-1.5">
        <Svg w={9} h={9}><path d="M.5.5h8v8h-8z" stroke="#999" /><path d="M3 3h3v3H3z" fill="#c9d6f5" stroke="#5a7dd0" /></Svg>
      </button>
      <input
        type="range"
        aria-label="확대/축소"
        defaultValue={48}
        className="mx-[3px] h-0.5 w-[61px] appearance-none bg-[#7d9bd8] [&::-webkit-slider-thumb]:h-[7px] [&::-webkit-slider-thumb]:w-[7px] [&::-webkit-slider-thumb]:appearance-none [&::-webkit-slider-thumb]:rounded-full [&::-webkit-slider-thumb]:border [&::-webkit-slider-thumb]:border-[#888] [&::-webkit-slider-thumb]:bg-white"
      />
      <button aria-label="확대">
        <Svg w={9} h={9}><path d="M.5.5h8v8h-8z" fill="#fff" stroke="#999" /><path d="M1.5 1.5h6v6h-6z" fill="#c9d6f5" stroke="#7d9bd8" /></Svg>
      </button>
      <button className="flex items-center gap-0.5 pl-[7px]">
        <Svg w={10} h={10}><circle cx="4" cy="4" r="3.3" stroke="#888" /><path d="M6.5 6.5 9.5 9.5" stroke="#555" strokeWidth="1.8" /></Svg>
        폭 맞춤
      </button>
      <Svg w={9} h={9} className="ml-1 self-end"><path d="M0 9 9 0M4 9l5-5" stroke="#bbb" /><path d="M6 9h3V6z" fill="#888" stroke="none" /></Svg>
    </div>
  </footer>
);

const App = () => (
  <div lang="ko" className={clsx("flex h-screen min-h-[400px] flex-col overflow-hidden border-l-2 border-r border-[#a8a8a8] bg-white", UI_FONT)}>
    <Header />
    <Ribbon />
    <Toolbar />
    <main className="flex min-h-0 flex-1">
      <StylePanel />
      <DocumentArea />
    </main>
    <StatusBar />
  </div>
);

export default App;
